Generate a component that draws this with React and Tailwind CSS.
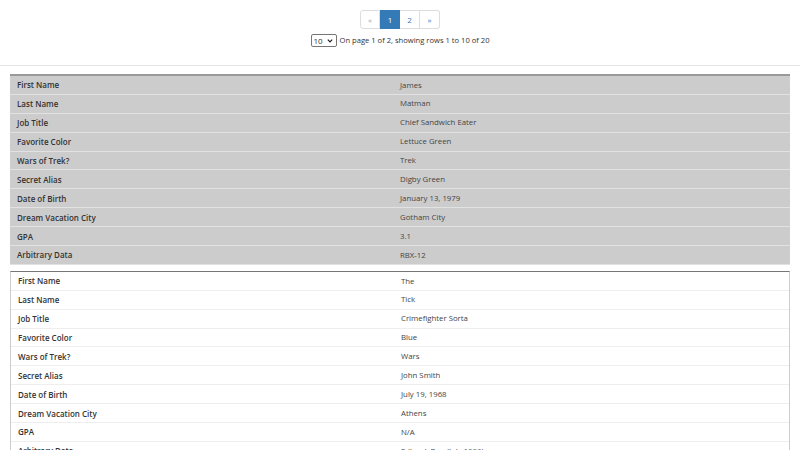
import React from 'react'

const people = [
  {
    first: 'James',
    last: 'Matman',
    job: 'Chief Sandwich Eater',
    color: 'Lettuce Green',
    trek: 'Trek',
    alias: 'Digby Green',
    dob: 'January 13, 1979',
    city: 'Gotham City',
    gpa: '3.1',
    data: 'RBX-12',
  },
  {
    first: 'The',
    last: 'Tick',
    job: 'Crimefighter Sorta',
    color: 'Blue',
    trek: 'Wars',
    alias: 'John Smith',
    dob: 'July 19, 1968',
    city: 'Athens',
    gpa: 'N/A',
    data: 'Edlund, Ben (July 1996)',
  },
]

const fields = [
  ['First Name', 'first'],
  ['Last Name', 'last'],
  ['Job Title', 'job'],
  ['Favorite Color', 'color'],
  ['Wars of Trek?', 'trek'],
  ['Secret Alias', 'alias'],
  ['Date of Birth', 'dob'],
  ['Dream Vacation City', 'city'],
  ['GPA', 'gpa'],
  ['Arbitrary Data', 'data'],
]

const Pager = () => (
  <div className="flex flex-col items-center pt-[10px]">
    <div className="flex text-[8px] leading-none">
      <span className="w-[20px] h-[19px] flex items-center justify-center border border-[#ddd] rounded-l-[3px] text-[#8aa8c8]">«</span>
      <span className="w-[20px] h-[19px] flex items-center justify-center border border-[#337ab7] bg-[#337ab7] text-white">1</span>
      <span className="w-[20px] h-[19px] flex items-center justify-center border border-l-0 border-[#ddd] text-[#337ab7]">2</span>
      <span className="w-[20px] h-[19px] flex items-center justify-center border border-l-0 border-[#ddd] rounded-r-[3px] text-[#337ab7]">»</span>
    </div>
    <div className="flex items-center mt-[5px] text-[7.6px] text-[#333]">
      <div className="w-[26px] h-[13px] border border-[#767676] rounded-[2px] flex items-center justify-between pl-[2px] pr-[3px] text-[8px]">
        <span>10</span>
        <svg width="6" height="4" viewBox="0 0 7 5"><path d="M0.8 0.8 L3.5 3.6 L6.2 0.8" fill="none" stroke="#222" strokeWidth="1.5" /></svg>
      </div>
      <span className="ml-[3px]">On page 1 of 2, showing rows 1 to 10 of 20</span>
    </div>
  </div>
)

const Block = ({ person, shaded }) => (
  <div
    className={
      shaded
        ? 'bg-[#cccccc] border-t-2 border-[#999]'
        : 'bg-white border-t border-x border-t-[#777] border-x-[#ccc] mt-[6px]'
    }
  >
    {fields.map(([label, key]) => (
      <div
        key={key}
        className={
          'grid grid-cols-[383px_1fr] h-[18.9px] items-center border-b pt-px ' +
          (shaded ? 'border-[#e2e2e2]' : 'border-[#eeeeee]')
        }
      >
        <div className="px-[7px] font-semibold text-[8px] text-[#333]">{label}</div>
        <div className="px-[7px] text-[7.8px] text-[#444]">{person[key]}</div>
      </div>
    ))}
  </div>
)

const App = () => {
  return (
    <div className="w-[800px] h-[450px] overflow-hidden bg-white" style={{ fontFamily: '"Open Sans", "Liberation Sans", sans-serif' }}>
      <Pager />
      <div className="h-px bg-[#e5e5e5] mt-[18px]" />
      <div className="mx-[10px] mt-[8px]">
        <Block person={people[0]} shaded />
        <Block person={people[1]} />
      </div>
    </div>
  )
}

export default App
